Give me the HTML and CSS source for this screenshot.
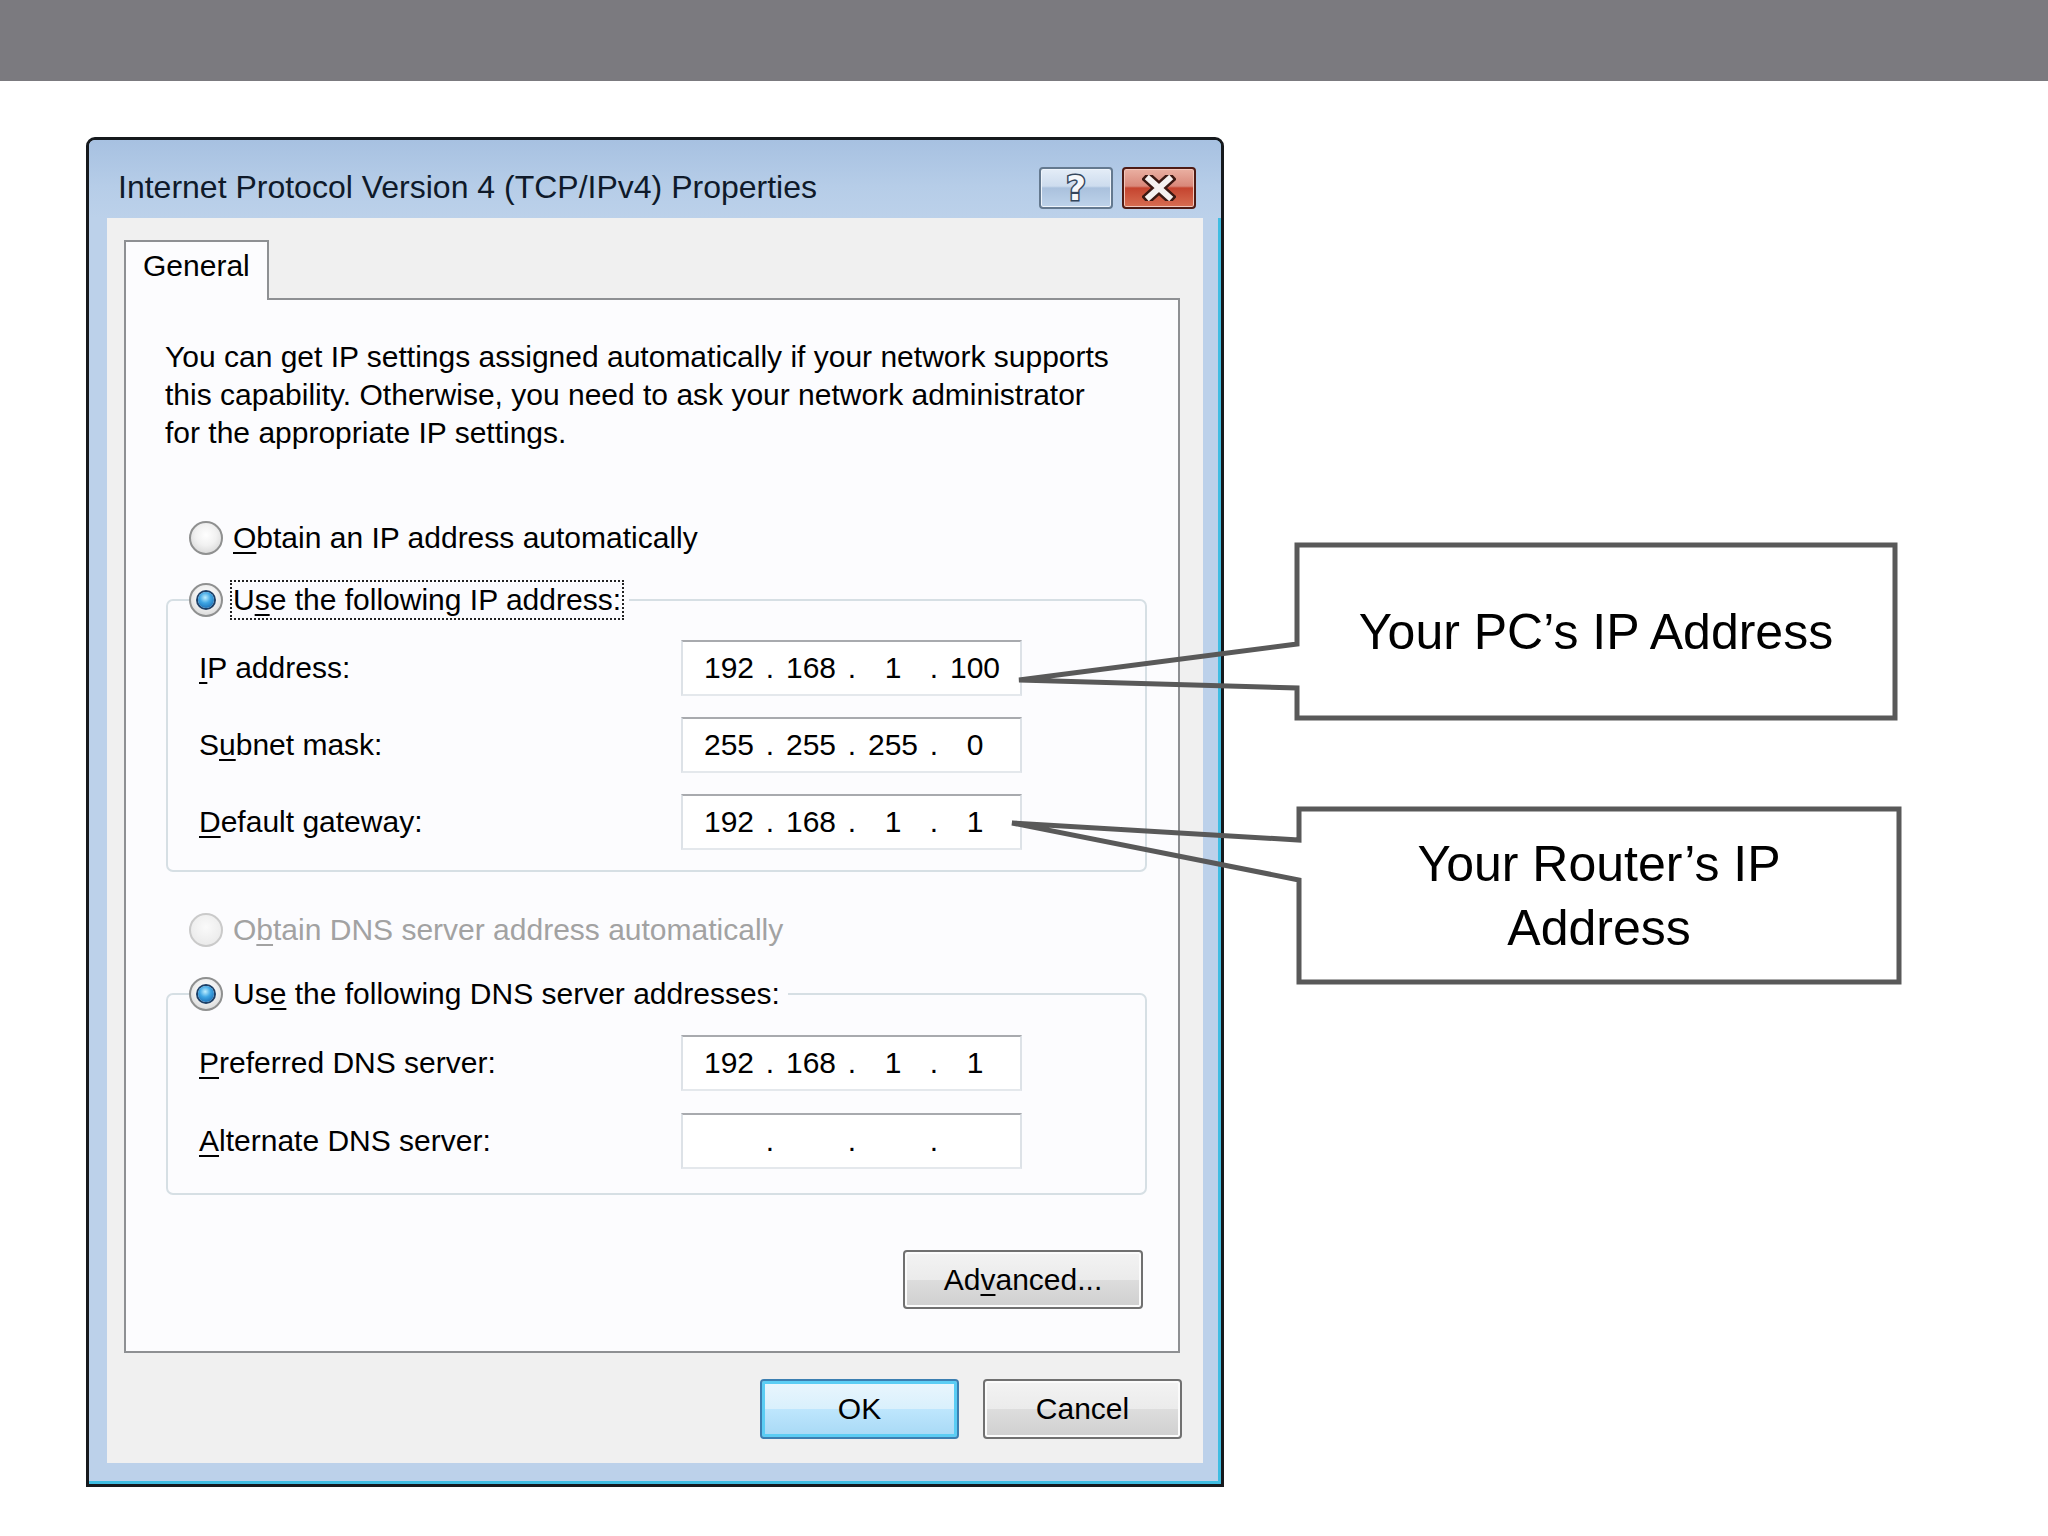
FILE: index.html
```html
<!DOCTYPE html>
<html lang="en">
<head>
  <meta charset="UTF-8">
  <link rel="stylesheet" href="styles.css">
  <title>Internet Protocol Version 4 (TCP/IPv4) Properties</title>
</head>
<body>
<div class="page">
  <div class="topbar"></div>

  <section class="dialog">
    <header class="titlebar">
      <h1 class="title">Internet Protocol Version 4 (TCP/IPv4) Properties</h1>
      <div class="caption-btns">
        <button class="cap cap-help"><span>?</span></button>
        <button class="cap cap-close">
          <svg width="34" height="26" viewBox="0 0 34 26">
            <path d="M7 4 L27 22 M27 4 L7 22" stroke="#3b1812" stroke-width="11" stroke-linecap="square" fill="none"/>
            <path d="M7 4 L27 22 M27 4 L7 22" stroke="#f4f1f0" stroke-width="6" stroke-linecap="square" fill="none"/>
          </svg>
        </button>
      </div>
    </header>

    <div class="frame">
      <div class="client">
        <div class="tabs">
          <div class="tab">General</div>
        </div>

        <div class="panel">
          <p class="intro">You can get IP settings assigned automatically if your network supports<br>this capability. Otherwise, you need to ask your network administrator<br>for the appropriate IP settings.</p>

          <div class="option opt-ip-auto">
            <span class="radio"></span>
            <span><u>O</u>btain an IP address automatically</span>
          </div>

          <fieldset class="group">
            <legend>
              <span class="option">
                <span class="radio on"></span>
                <span class="focus">U<u>s</u>e the following IP address:</span>
              </span>
            </legend>
            <div class="row">
              <label><u>I</u>P address:</label>
              <div class="ipfield"><span class="octet">192</span><span class="dot">.</span><span class="octet">168</span><span class="dot">.</span><span class="octet">1</span><span class="dot">.</span><span class="octet">100</span></div>
            </div>
            <div class="row">
              <label>S<u>u</u>bnet mask:</label>
              <div class="ipfield"><span class="octet">255</span><span class="dot">.</span><span class="octet">255</span><span class="dot">.</span><span class="octet">255</span><span class="dot">.</span><span class="octet">0</span></div>
            </div>
            <div class="row">
              <label><u>D</u>efault gateway:</label>
              <div class="ipfield"><span class="octet">192</span><span class="dot">.</span><span class="octet">168</span><span class="dot">.</span><span class="octet">1</span><span class="dot">.</span><span class="octet">1</span></div>
            </div>
          </fieldset>

          <div class="option dns-auto disabled">
            <span class="radio off"></span>
            <span>O<u>b</u>tain DNS server address automatically</span>
          </div>

          <fieldset class="group group-dns">
            <legend>
              <span class="option">
                <span class="radio on"></span>
                <span>Us<u>e</u> the following DNS server addresses:</span>
              </span>
            </legend>
            <div class="row">
              <label><u>P</u>referred DNS server:</label>
              <div class="ipfield"><span class="octet">192</span><span class="dot">.</span><span class="octet">168</span><span class="dot">.</span><span class="octet">1</span><span class="dot">.</span><span class="octet">1</span></div>
            </div>
            <div class="row">
              <label><u>A</u>lternate DNS server:</label>
              <div class="ipfield"><span class="octet"></span><span class="dot">.</span><span class="octet"></span><span class="dot">.</span><span class="octet"></span><span class="dot">.</span><span class="octet"></span></div>
            </div>
          </fieldset>

          <div class="advanced-row">
            <button class="btn btn-advanced">Ad<u>v</u>anced...</button>
          </div>
        </div>

        <div class="actions">
          <button class="btn btn-default">OK</button>
          <button class="btn">Cancel</button>
        </div>
      </div>
    </div>
  </section>

  <!-- annotations over the screenshot -->
  <div class="callout callout-pc">
    <svg width="885" height="183" viewBox="0 0 885 183">
      <polygon points="282,104 282,5 880,5 880,178 282,178 282,148 4,140" fill="none" stroke="#595959" stroke-width="5"/>
    </svg>
    <div class="callout-text">Your PC’s IP Address</div>
  </div>

  <div class="callout callout-router">
    <svg width="896" height="183" viewBox="0 0 896 183">
      <polygon points="291,36 291,5 891,5 891,178 291,178 291,76 4,19" fill="none" stroke="#595959" stroke-width="5"/>
    </svg>
    <div class="callout-text">Your Router’s IP<br>Address</div>
  </div>
</div>
</body>
</html>
```

FILE: styles.css
```css
/* Reset */
* {
  box-sizing: border-box;
}

body {
  margin: 0;
  font-family: "Liberation Sans", Arial, sans-serif;
  background: #fff;
  color: #000;
}

.page {
  position: relative;
  width: 2048px;
  height: 1536px;
  overflow: hidden;
}

.topbar {
  height: 81px;
  background: #7b7a7f;
}

/* Dialog window */
.dialog {
  width: 1138px;
  margin: 56px 0 0 86px;
  border: 3px solid #16191d;
  border-radius: 9px 9px 0 0;
  background: #bcd1ea;
  box-shadow: inset -3px -3px 0 #3fbde2;
}

.titlebar {
  display: flex;
  justify-content: space-between;
  align-items: flex-start;
  height: 78px;
  padding: 0 25px 0 29px;
  border-radius: 6px 6px 0 0;
  background: linear-gradient(#a7c1e1, #b6cde8 60%, #bcd1ea);
}

.title {
  margin: 0;
  padding-top: 27px;
  font-size: 32px;
  line-height: 40px;
  font-weight: normal;
  color: #0f1a2a;
}

.caption-btns {
  display: flex;
  gap: 9px;
  margin-top: 27px;
}

.cap {
  display: flex;
  align-items: center;
  justify-content: center;
  width: 74px;
  height: 42px;
  padding: 0;
  border-radius: 4px;
}

.cap-help {
  border: 2px solid #64798f;
  background: linear-gradient(#e4edf7, #cddcee 45%, #aac1dd 50%, #bed3ea);
  box-shadow: inset 0 0 0 1px #eef4fb;
}

.cap-help span {
  font-family: "DejaVu Sans", sans-serif;
  font-size: 34px;
  line-height: 34px;
  font-weight: bold;
  color: #f6f8fb;
  -webkit-text-stroke: 3px #34465c;
  paint-order: stroke fill;
}

.cap-close {
  border: 2px solid #4e1b14;
  background: linear-gradient(#eab0a2, #d9887a 45%, #c5442f 50%, #d76e52);
  box-shadow: inset 0 0 0 1px #f2c6bb;
}

.frame {
  padding: 0 18px 21px 18px;
}

.client {
  background: #f0f0f0;
  padding: 22px 23px 24px 17px;
}

/* Tab page */
.tabs {
  display: flex;
}

.tab {
  position: relative;
  z-index: 1;
  height: 60px;
  margin-bottom: -2px;
  padding: 4px 17px 0;
  border: 2px solid #8e9093;
  border-bottom: none;
  background: #fcfcfe;
  font-size: 30px;
  line-height: 40px;
}

.panel {
  border: 2px solid #8e9093;
  background: #fcfcfe;
  padding: 38px 0 42px;
}

.intro {
  margin: 0 0 0 39px;
  font-size: 30px;
  line-height: 38px;
}

u {
  text-decoration-thickness: 2px;
  text-underline-offset: 4px;
}

/* Radio options */
.option {
  display: flex;
  align-items: center;
  gap: 10px;
  height: 40px;
  font-size: 30px;
}

.panel > .option {
  margin-left: 63px;
}

.opt-ip-auto {
  margin-top: 66px;
}

.dns-auto {
  margin-top: 38px;
}

.disabled {
  color: #a2a2a2;
}

.radio {
  display: grid;
  place-items: center;
  width: 34px;
  height: 34px;
  border-radius: 50%;
  border: 2px solid #8f9090;
  background: radial-gradient(circle at 50% 40%, #fff 0%, #f1f1f1 45%, #cdcdcd 100%);
}

.radio.on::after {
  content: "";
  width: 16px;
  height: 16px;
  border-radius: 50%;
  background: radial-gradient(circle at 45% 35%, #bdeeff 0%, #3fa6e4 40%, #0d58a2 100%);
  box-shadow: 0 0 0 2px #1d3f66;
}

.radio.off {
  border-color: #cacaca;
  background: radial-gradient(circle at 50% 40%, #fafafa, #e6e6e6);
}

.focus {
  outline: 2px dotted #222;
  outline-offset: 1px;
}

/* Group boxes */
.group {
  margin: 22px 31px 0 40px;
  padding: 20px 0 20px 21px;
  border: 2px solid #d6dfe4;
  border-radius: 7px;
  min-width: 0;
}

.group legend {
  padding: 0 8px 0 0;
}

.group-dns {
  margin-top: 24px;
  padding-top: 21px;
  padding-bottom: 24px;
}

.row {
  display: flex;
  align-items: center;
  margin-left: 10px;
  font-size: 30px;
}

.row + .row {
  margin-top: 21px;
}

.group-dns .row + .row {
  margin-top: 22px;
}

.row label {
  width: 482px;
}

.ipfield {
  display: flex;
  align-items: center;
  width: 341px;
  height: 56px;
  padding-left: 11px;
  background: #fff;
  border: 2px solid;
  border-color: #a8aaae #dde2e7 #e4e8ec #dde2e7;
}

.octet {
  width: 70px;
  text-align: center;
}

.dot {
  width: 12px;
  text-align: center;
}

/* Buttons */
.btn {
  padding: 0;
  font: 30px "Liberation Sans", Arial, sans-serif;
  color: #000;
  border: 2px solid #707070;
  border-radius: 4px;
  background: linear-gradient(#f3f3f3, #ebebeb 50%, #dddddd 50%, #cfcfcf);
  box-shadow: inset 0 0 0 2px #fbfbfb;
}

.advanced-row {
  display: flex;
  justify-content: flex-end;
  margin: 55px 35px 0 0;
}

.btn-advanced {
  width: 240px;
  height: 59px;
}

.actions {
  display: flex;
  justify-content: flex-end;
  gap: 24px;
  margin: 26px -2px 0 0;
}

.actions .btn {
  width: 199px;
  height: 60px;
}

.actions .btn-default {
  border-color: #3c7fb1;
  background: linear-gradient(#eaf6fd, #d9f0fc 50%, #bee6fd 50%, #a7d9f5);
  box-shadow: inset 0 0 0 3px #5bcdf4;
}

/* Callouts */
.callout {
  position: absolute;
}

.callout svg {
  position: absolute;
  left: 0;
  top: 0;
}

.callout-text {
  position: absolute;
  top: 5px;
  height: 173px;
  display: flex;
  align-items: center;
  justify-content: center;
  text-align: center;
  font-size: 50px;
  line-height: 64px;
}

.callout-pc {
  left: 1015px;
  top: 540px;
  width: 885px;
  height: 183px;
}

.callout-pc .callout-text {
  left: 282px;
  width: 598px;
}

.callout-router {
  left: 1008px;
  top: 804px;
  width: 896px;
  height: 183px;
}

.callout-router .callout-text {
  left: 291px;
  width: 600px;
}
```
